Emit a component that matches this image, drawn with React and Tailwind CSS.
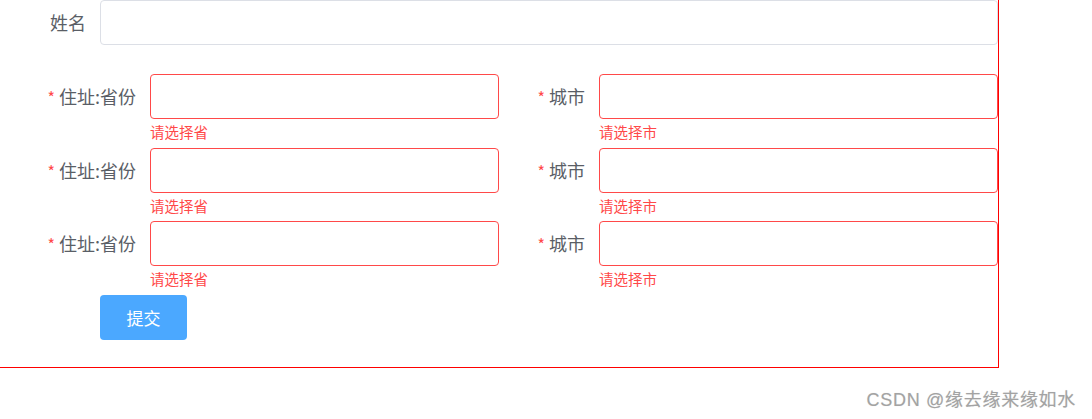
import React from "react";

function Label({ children, width, required }) {
  return (
    <div
      className={`${width} shrink-0 pr-[14px] text-right leading-[45px] text-[18px] text-[#5a5e66] whitespace-nowrap`}
    >
      {required && <span className="text-[#ff4949] mr-[4px] text-[16px]">*</span>}
      {children}
    </div>
  );
}

function Field({ label, labelWidth, error }) {
  return (
    <div className="flex w-[499px]">
      <Label width={labelWidth} required>
        {label}
      </Label>
      <div className="flex-1 flex flex-col">
        <div className="h-[45px] border border-[#ff4949] rounded-[4px] bg-white" />
        <div className="mt-[6px] h-[14.5px] text-[14.5px] leading-[14.5px] text-[#ff4949] whitespace-nowrap">
          {error}
        </div>
        <div className="h-[8px]" />
      </div>
    </div>
  );
}

export default function App() {
  const rows = [0, 1, 2];
  return (
    <div className="relative w-[1092px] h-[419px] bg-white font-['Noto_Sans_CJK_SC',sans-serif]">
      <div className="w-[999px] border-r border-b border-[#ff0000] pb-[27.5px]">
        <div className="flex h-[45px] mb-[29px]">
          <Label width="w-[100px]">姓名</Label>
          <div className="flex-1 h-[45px] border border-[#dcdfe6] rounded-[4px] bg-white" />
        </div>
        {rows.map((i) => (
          <div key={i} className="flex">
            <Field label="住址:省份" labelWidth="w-[150px]" error="请选择省" />
            <Field label="城市" labelWidth="w-[100px]" error="请选择市" />
          </div>
        ))}
        <div className="flex pl-[100px]">
          <button className="w-[87px] h-[45px] rounded-[4px] bg-[#4ba8ff] text-white text-[17px] leading-[45px] text-center">
            提交
          </button>
        </div>
      </div>
      <div className="absolute right-[16px] bottom-[7px] text-[18px] leading-[24px] tracking-[0.7px] text-[#a3a3a3] font-['Liberation_Sans','Noto_Sans_CJK_SC',sans-serif] [text-shadow:0_0_1px_rgba(0,0,0,0.15)]">
        CSDN @缘去缘来缘如水
      </div>
    </div>
  );
}
